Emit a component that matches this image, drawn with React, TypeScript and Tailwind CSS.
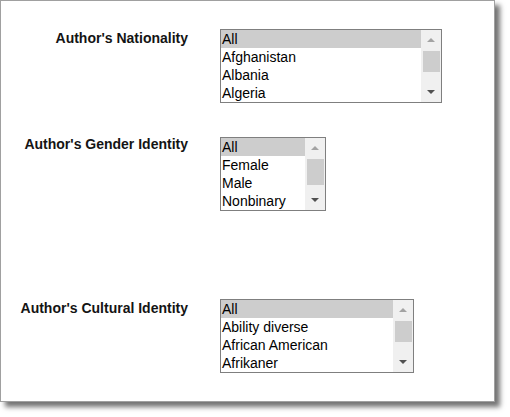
const FONT = "font-['Liberation_Sans',Arial,sans-serif]";

type ListProps = {
  options: string[];
  width: string;
  thumb: string;
};

function ListBox({ options, width, thumb }: ListProps) {
  return (
    <div className={`${width} h-[74px] flex border border-[#7f7f7f] bg-white`}>
      <ul className="flex-1 flex flex-col">
        {options.map((opt, i) => (
          <li
            key={opt}
            className={`h-[18px] leading-[18px] pl-[1px] text-[14px] text-black whitespace-nowrap ${
              i === 0 ? "bg-[#cdcdcd]" : ""
            }`}
          >
            {opt}
          </li>
        ))}
      </ul>
      {/* scrollbar */}
      <div className="w-[20px] flex flex-col bg-[#f0f0f0]">
        <div className="h-[20px] flex items-center justify-center">
          <span className="border-x-[4px] border-x-transparent border-b-[4px] border-b-[#a3a3a3]" />
        </div>
        <div className="flex-1 flex justify-center pt-[1px]">
          <div className={`w-[17px] ${thumb} bg-[#cdcdcd]`} />
        </div>
        <div className="h-[20px] flex items-center justify-center">
          <span className="border-x-[4px] border-x-transparent border-t-[4px] border-t-[#505050]" />
        </div>
      </div>
    </div>
  );
}

function Label({ children, className = "" }: { children: string; className?: string }) {
  return (
    <div className={`text-right text-[14px] leading-[18px] font-bold text-[#141414] ${className}`}>
      {children}
    </div>
  );
}

export default function App() {
  return (
    <div className={`w-[510px] h-[417px] bg-white ${FONT}`}>
      <div className="w-[495px] h-[402px] border border-[#a0a0a0] bg-white shadow-[5px_5px_5px_rgba(0,0,0,0.55)] pt-[28px]">
        <div className="grid grid-cols-[187px_auto] gap-x-[32px] items-start">
          <Label>Author's Nationality</Label>
          <ListBox
            options={["All", "Afghanistan", "Albania", "Algeria"]}
            width="w-[222px]"
            thumb="h-[21px]"
          />

          <Label className="mt-[32px]">Author's Gender Identity</Label>
          <div className="mt-[34px]">
            <ListBox
              options={["All", "Female", "Male", "Nonbinary"]}
              width="w-[106px]"
              thumb="h-[26px]"
            />
          </div>

          <Label className="mt-[88px]">Author's Cultural Identity</Label>
          <div className="mt-[88px]">
            <ListBox
              options={["All", "Ability diverse", "African American", "Afrikaner"]}
              width="w-[194px]"
              thumb="h-[21px]"
            />
          </div>
        </div>
      </div>
    </div>
  );
}
